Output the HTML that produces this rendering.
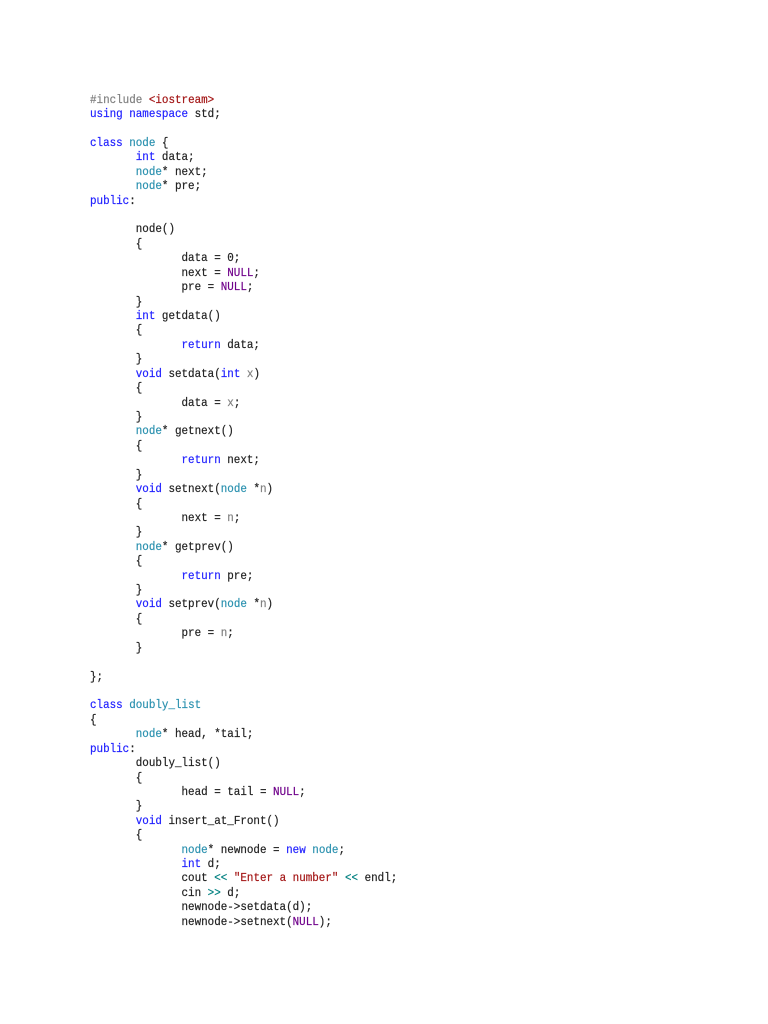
<!DOCTYPE html>
<html><head><meta charset="utf-8">
<style>
html,body{margin:0;padding:0;background:#fff;width:768px;height:1024px;overflow:hidden}
pre{position:absolute;left:90.4px;top:93.7px;margin:0;font:11.6px/14.42px "Liberation Mono",monospace;color:#222;tab-size:7;transform:scaleX(.9395);transform-origin:0 0;filter:blur(.3px);-webkit-text-stroke:.2px currentColor}
.k{color:#1f1fff}.t{color:#2b91af}.s{color:#a31515}.m{color:#808080}.n{color:#6f008a}.o{color:#008080}.p{color:#808080}
</style></head><body>
<pre><span class="m">#include</span> <span class="s">&lt;iostream&gt;</span>
<span class="k">using</span> <span class="k">namespace</span> std;

<span class="k">class</span> <span class="t">node</span> {
	<span class="k">int</span> data;
	<span class="t">node</span>* next;
	<span class="t">node</span>* pre;
<span class="k">public</span>:

	node()
	{
		data = 0;
		next = <span class="n">NULL</span>;
		pre = <span class="n">NULL</span>;
	}
	<span class="k">int</span> getdata()
	{
		<span class="k">return</span> data;
	}
	<span class="k">void</span> setdata(<span class="k">int</span> <span class="p">x</span>)
	{
		data = <span class="p">x</span>;
	}
	<span class="t">node</span>* getnext()
	{
		<span class="k">return</span> next;
	}
	<span class="k">void</span> setnext(<span class="t">node</span> *<span class="p">n</span>)
	{
		next = <span class="p">n</span>;
	}
	<span class="t">node</span>* getprev()
	{
		<span class="k">return</span> pre;
	}
	<span class="k">void</span> setprev(<span class="t">node</span> *<span class="p">n</span>)
	{
		pre = <span class="p">n</span>;
	}

};

<span class="k">class</span> <span class="t">doubly_list</span>
{
	<span class="t">node</span>* head, *tail;
<span class="k">public</span>:
	doubly_list()
	{
		head = tail = <span class="n">NULL</span>;
	}
	<span class="k">void</span> insert_at_Front()
	{
		<span class="t">node</span>* newnode = <span class="k">new</span> <span class="t">node</span>;
		<span class="k">int</span> d;
		cout <span class="o">&lt;&lt;</span> <span class="s">"Enter a number"</span> <span class="o">&lt;&lt;</span> endl;
		cin <span class="o">&gt;&gt;</span> d;
		newnode-&gt;setdata(d);
		newnode-&gt;setnext(<span class="n">NULL</span>);
</pre>
</body></html>
